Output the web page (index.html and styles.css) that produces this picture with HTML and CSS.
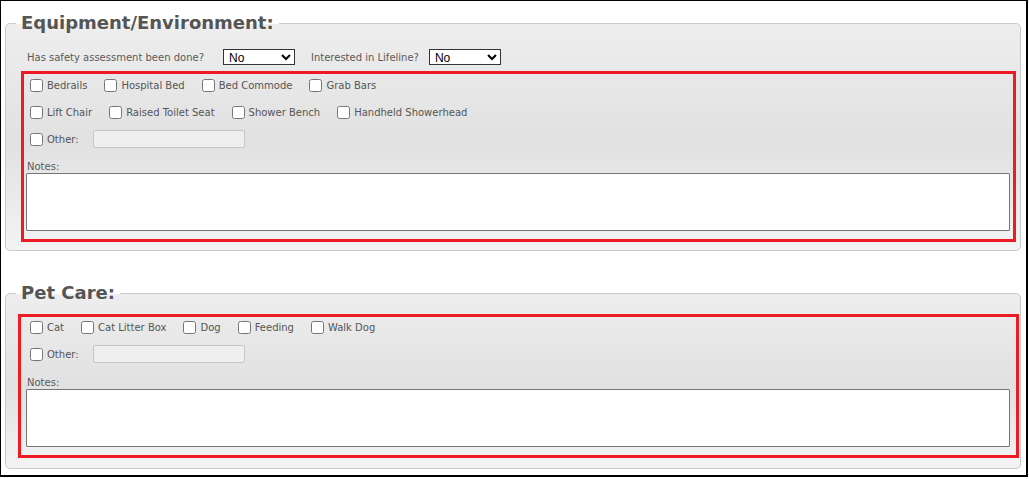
FILE: index.html
```html
<!DOCTYPE html>
<html lang="en">
<head>
<meta charset="utf-8">
<title>Equipment / Pet Care</title>
<link rel="stylesheet" href="styles.css">
</head>
<body>
<div class="frame">
  <fieldset class="panel">
    <legend class="panel-title">Equipment/Environment:</legend>
    <div class="question-row">
      <label class="q-label q-label-first" for="safety">Has safety assessment been done?</label>
      <select id="safety" class="yn-select"><option>No</option><option>Yes</option></select>
      <label class="q-label q-label-second" for="lifeline">Interested in Lifeline?</label>
      <select id="lifeline" class="yn-select"><option>No</option><option>Yes</option></select>
    </div>
    <div class="highlight highlight-equipment">
      <div class="check-row">
        <label class="check"><input type="checkbox"><span>Bedrails</span></label>
        <label class="check"><input type="checkbox"><span>Hospital Bed</span></label>
        <label class="check"><input type="checkbox"><span>Bed Commode</span></label>
        <label class="check"><input type="checkbox"><span>Grab Bars</span></label>
      </div>
      <div class="check-row">
        <label class="check"><input type="checkbox"><span>Lift Chair</span></label>
        <label class="check"><input type="checkbox"><span>Raised Toilet Seat</span></label>
        <label class="check"><input type="checkbox"><span>Shower Bench</span></label>
        <label class="check"><input type="checkbox"><span>Handheld Showerhead</span></label>
      </div>
      <div class="check-row check-row-other">
        <label class="check"><input type="checkbox"><span>Other:</span></label>
        <input class="other-input" type="text" disabled>
      </div>
      <label class="notes-label">Notes:</label>
      <textarea class="notes"></textarea>
    </div>
  </fieldset>

  <fieldset class="panel panel-pet">
    <legend class="panel-title">Pet Care:</legend>
    <div class="highlight highlight-pet">
      <div class="check-row">
        <label class="check"><input type="checkbox"><span>Cat</span></label>
        <label class="check"><input type="checkbox"><span>Cat Litter Box</span></label>
        <label class="check"><input type="checkbox"><span>Dog</span></label>
        <label class="check"><input type="checkbox"><span>Feeding</span></label>
        <label class="check"><input type="checkbox"><span>Walk Dog</span></label>
      </div>
      <div class="check-row check-row-other">
        <label class="check"><input type="checkbox"><span>Other:</span></label>
        <input class="other-input" type="text" disabled>
      </div>
      <label class="notes-label notes-label-pet">Notes:</label>
      <textarea class="notes"></textarea>
    </div>
  </fieldset>
</div>
</body>
</html>
```

FILE: styles.css
```css
* {
  box-sizing: border-box;
}

body {
  margin: 0;
  background: #fff;
  font-family: "DejaVu Sans", Verdana, sans-serif;
}

.frame {
  width: 1028px;
  height: 477px;
  border-style: solid;
  border-color: #000;
  border-width: 1px 2px 2px 1px;
  overflow: hidden;
  background: #fff;
}

.panel {
  margin: 12px 5px 0 4px;
  padding: 0 4px 8px 10px;
  border: 1px solid #cacaca;
  border-radius: 5px;
  min-width: 0;
  background: linear-gradient(to bottom, #eeeeee 0%, #e1e1e1 52%, #f3f3f3 100%);
}

.panel-pet {
  margin-top: 32px;
  padding-bottom: 10px;
}

.panel-title {
  padding: 0 5px;
  font-size: 18px;
  font-weight: bold;
  line-height: 20px;
  color: #555;
}

.question-row {
  display: flex;
  align-items: center;
  height: 16px;
  margin: 16px 0 6px 11px;
}

.q-label {
  font-size: 10px;
  color: #5a5a5a;
}

.q-label-first {
  width: 196px;
}

.q-label-second {
  margin: 0 10px 0 16px;
}

.yn-select {
  width: 72px;
  height: 16px;
  margin: 0;
  padding: 0 0 0 1px;
  font-family: "Liberation Sans", Arial, sans-serif;
  font-size: 12px;
  color: #000;
  background: #fff;
  border: 1px solid #333;
  border-radius: 0;
}

.highlight {
  border: 3px solid #ed1c24;
}

.highlight-equipment {
  margin: 0 0 0 5px;
  padding: 1px 3px 8px 2px;
}

.highlight-pet {
  margin: 11px -3px 0 2px;
  padding: 0 6px 8px 5px;
}

.check-row {
  display: flex;
  align-items: center;
  gap: 17px;
  height: 20px;
  padding-left: 4px;
  margin-bottom: 7px;
}

.check-row-other {
  gap: 14px;
}

.check {
  display: flex;
  align-items: center;
  gap: 4px;
  font-size: 10px;
  color: #555;
}

.check input {
  width: 13px;
  height: 13px;
  margin: 0;
}

.other-input {
  width: 152px;
  height: 18px;
  margin: 0;
  background: #efefef;
  border: 1px solid #c6c6c6;
  border-radius: 2px;
}

.notes-label {
  display: block;
  margin-top: 12px;
  padding-left: 1px;
  font-size: 10px;
  line-height: 12px;
  color: #5a5a5a;
}

.notes-label-pet {
  margin-top: 13px;
}

.notes {
  display: block;
  width: 100%;
  height: 58px;
  margin: 0;
  border: 1px solid #767676;
  border-radius: 1px;
  background: #fff;
  resize: none;
}
```
